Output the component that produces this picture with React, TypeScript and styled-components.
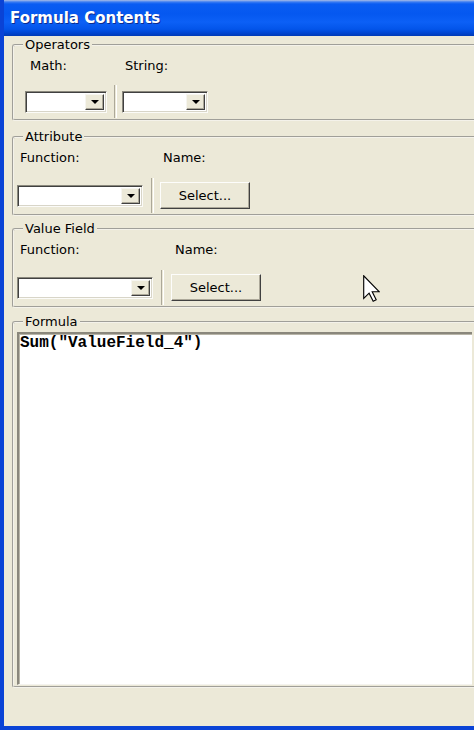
import React from 'react';
import styled, { createGlobalStyle } from 'styled-components';

const GlobalStyle = createGlobalStyle`
  html, body {
    margin: 0;
    padding: 0;
    background: #ece9d8;
    overflow: hidden;
  }
  body {
    font-family: "DejaVu Sans", Tahoma, sans-serif;
    font-size: 13px;
    color: #000;
  }
`;

// Outer window frame: blue XP border on the left and bottom edges
const Window = styled.div`
  position: relative;
  width: 474px;
  height: 730px;
  box-sizing: border-box;
  display: flex;
  flex-direction: column;
  overflow: hidden;
  background: #ece9d8;
  border-left: 4px solid #0a43d6;
  border-bottom: 4px solid #0a43d6;
`;

const TitleBar = styled.div`
  height: 36px;
  flex-shrink: 0;
  display: flex;
  align-items: center;
  margin-left: -4px;
  padding-left: 10px;
  background: linear-gradient(
    to bottom,
    #a9bde6 0px,
    #3a7cf2 2px,
    #0a5cf2 4px,
    #0558f0 14px,
    #0c60f6 22px,
    #0355ea 29px,
    #0045d0 33px,
    #003ab6 36px
  );
`;

const Title = styled.span`
  font-family: "DejaVu Sans", Tahoma, sans-serif;
  font-weight: bold;
  font-size: 15px;
  color: #fff;
  text-shadow: 1px 1px 0 #0a2c90;
`;

const Content = styled.div`
  flex: 1;
  display: flex;
  flex-direction: column;
  padding: 1px 0 38px 8px;
  min-height: 0;
`;

const Group = styled.fieldset<{ $top?: number; $grow?: boolean }>`
  margin: ${p => p.$top ?? 0}px -40px 0 0;
  padding: 0;
  min-width: 0;
  border: 2px groove #f4f2ea;
  border-radius: 3px;
  ${p => p.$grow && 'flex: 1; display: flex; flex-direction: column; min-height: 0;'}
`;

const Legend = styled.legend`
  margin-left: 9px;
  padding: 0 2px;
  line-height: 16px;
  font-size: 13px;
`;

const GroupBody = styled.div<{ $left: number; $top?: number; $bottom?: number; $grow?: boolean }>`
  padding: ${p => p.$top ?? 5}px 0 ${p => p.$bottom ?? 1}px ${p => p.$left}px;
  ${p => p.$grow && 'flex: 1; display: flex; flex-direction: column; min-height: 0;'}
`;

const LabelRow = styled.div<{ $gap: number }>`
  display: flex;
  height: 16px;
  margin-bottom: ${p => p.$gap}px;
`;

const Label = styled.span<{ $w?: number; $indent: number }>`
  display: block;
  box-sizing: border-box;
  width: ${p => (p.$w ? `${p.$w}px` : 'auto')};
  padding-left: ${p => p.$indent}px;
  line-height: 16px;
  white-space: nowrap;
`;

const ControlRow = styled.div`
  display: flex;
  align-items: center;
`;

const VSep = styled.div<{ $h: number; $before: number; $after: number }>`
  width: 1px;
  height: ${p => p.$h}px;
  margin: 0 ${p => p.$after}px 0 ${p => p.$before}px;
  border-left: 1px solid #aca899;
  border-right: 1px solid #fff;
`;

const ComboField = styled.div<{ $w: number }>`
  width: ${p => p.$w}px;
  height: 22px;
  box-sizing: border-box;
  display: flex;
  justify-content: flex-end;
  background: #fff;
  border-style: solid;
  border-width: 1px;
  border-color: #8a887d #fbfbf8 #fbfbf8 #8a887d;
  box-shadow: inset 1px 1px 0 #404040, inset -1px -1px 0 #d8d5c8;
  padding: 2px 2px 2px 0;
`;

const ComboButton = styled.div`
  width: 19px;
  box-sizing: border-box;
  display: flex;
  align-items: center;
  justify-content: center;
  background: #ece9d8;
  border-style: solid;
  border-width: 1px;
  border-color: #f6f5f0 #404040 #404040 #f6f5f0;
  box-shadow: inset -1px -1px 0 #aca899;
`;

const Arrow = styled.span`
  width: 0;
  height: 0;
  border-left: 4px solid transparent;
  border-right: 4px solid transparent;
  border-top: 4px solid #000;
  margin-top: 1px;
`;

const PushButton = styled.button`
  width: 90px;
  height: 27px;
  box-sizing: border-box;
  padding: 0;
  font-family: "DejaVu Sans", Tahoma, sans-serif;
  font-size: 13px;
  color: #000;
  background: #ece9d8;
  border-style: solid;
  border-width: 1px;
  border-color: #fdfdfb #404040 #404040 #fdfdfb;
  box-shadow: inset -1px -1px 0 #aca899;
  border-radius: 0;
`;

const FormulaBox = styled.div`
  flex: 1;
  margin-right: 40px;
  background: #fff;
  border-style: solid;
  border-width: 2px 0 1px 2px;
  border-color: #8a877c #fff #f4f3ee #8a877c;
  box-shadow: inset 1px 1px 0 #b8b5a8;
  padding: 0 1px;
  font-family: "Liberation Mono", "Courier New", monospace;
  font-weight: bold;
  font-size: 16px;
  line-height: 18px;
  white-space: pre;
`;

const Cursor = styled.svg`
  position: absolute;
  left: 359px;
  top: 275px;
  pointer-events: none;
`;

const Combo: React.FC<{ width: number }> = ({ width }) => (
  <ComboField $w={width}>
    <ComboButton>
      <Arrow />
    </ComboButton>
  </ComboField>
);

interface PickerProps {
  title: string;
  top: number;
  comboWidth: number;
  before: number;
  after: number;
  nameIndent: number;
}

// Function combo + Name "Select..." button, shared by Attribute and Value Field
const PickerGroup: React.FC<PickerProps> = ({ title, top, comboWidth, before, after, nameIndent }) => (
  <Group $top={top}>
    <Legend>{title}</Legend>
    <GroupBody $left={3}>
      <LabelRow $gap={12}>
        <Label $w={comboWidth + before + 2 + after} $indent={3}>Function:</Label>
        <Label $indent={nameIndent}>Name:</Label>
      </LabelRow>
      <ControlRow>
        <Combo width={comboWidth} />
        <VSep $h={35} $before={before} $after={after} />
        <PushButton>Select...</PushButton>
      </ControlRow>
    </GroupBody>
  </Group>
);

const App: React.FC = () => (
  <>
    <GlobalStyle />
    <Window>
      <TitleBar>
        <Title>Formula Contents</Title>
      </TitleBar>
      <Content>
        <Group>
          <Legend>Operators</Legend>
          <GroupBody $left={11}>
            <LabelRow $gap={11}>
              <Label $w={96} $indent={5}>Math:</Label>
              <Label $indent={4}>String:</Label>
            </LabelRow>
            <ControlRow>
              <Combo width={82} />
              <VSep $h={33} $before={7} $after={5} />
              <Combo width={86} />
            </ControlRow>
          </GroupBody>
        </Group>

        <PickerGroup title="Attribute" top={8} comboWidth={126} before={8} after={6} nameIndent={4} />
        <PickerGroup title="Value Field" top={5} comboWidth={136} before={8} after={7} nameIndent={5} />

        <Group $top={6} $grow>
          <Legend>Formula</Legend>
          <GroupBody $left={3} $top={2} $bottom={1} $grow>
            <FormulaBox>Sum("ValueField_4")</FormulaBox>
          </GroupBody>
        </Group>
      </Content>

      <Cursor width="17" height="27" viewBox="0 0 12 19">
        <path
          d="M0.5 0.5 L0.5 16.5 L4.3 12.8 L7.2 18.5 L9.3 17.5 L6.5 11.8 L11.5 11.8 Z"
          fill="#fff"
          stroke="#000"
          strokeWidth="0.8"
          strokeLinejoin="miter"
        />
      </Cursor>
    </Window>
  </>
);

export default App;
